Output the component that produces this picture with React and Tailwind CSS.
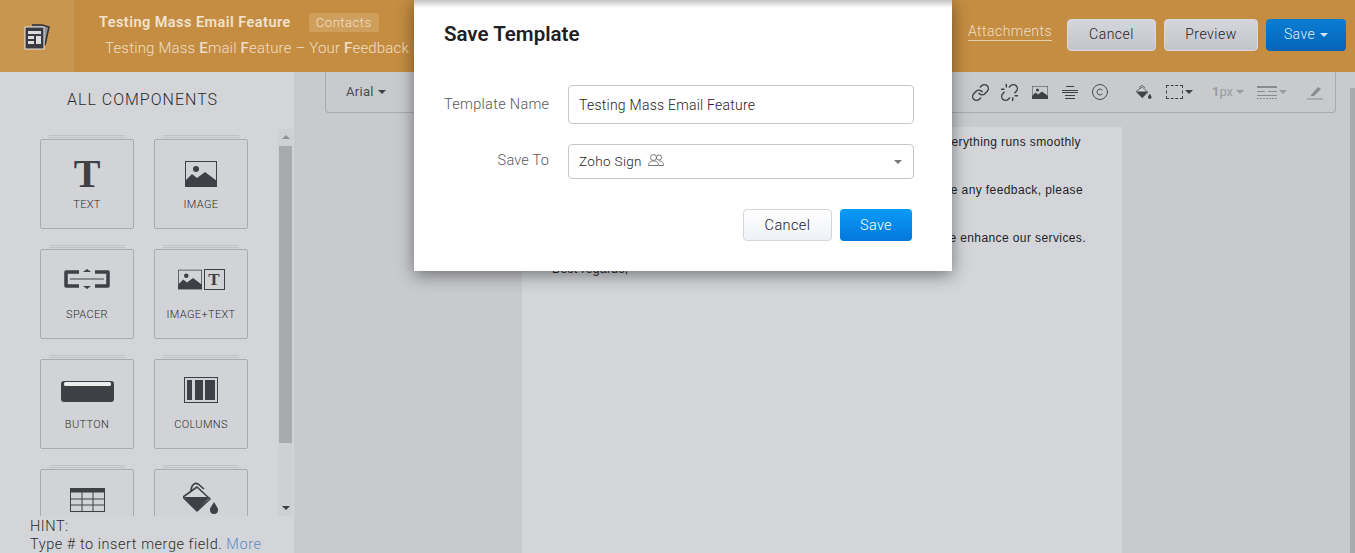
import { Copyright, Link, Unlink } from 'lucide-react';

const ink = '#3f4045';

function Caret({ className = 'border-t-[#3f4045]' }) {
  return <span className={`inline-block w-0 h-0 border-x-[4px] border-x-transparent border-t-[4px] ${className}`} />;
}

function PictureIcon({ w = 32, h = 26 }) {
  return (
    <svg width={w} height={h} viewBox="0 0 32 26">
      <rect x="0.5" y="0.5" width="31" height="25" fill="none" stroke={ink} />
      <circle cx="11" cy="8" r="3" fill={ink} />
      <path d="M0 25V20L7 13L12 17L20 11L32 20V26H0Z" fill={ink} />
    </svg>
  );
}

function TextGlyph({ size = 40 }) {
  return (
    <span className="font-['Liberation_Serif',serif] font-bold leading-none text-[#3f4045]" style={{ fontSize: size }}>T</span>
  );
}

function SpacerIcon() {
  return (
    <svg width="46" height="20" viewBox="0 0 46 20" fill="none">
      <path d="M15 3H2V17H15M31 3H44V17H31" stroke={ink} strokeWidth="3.5" strokeLinejoin="round" />
      <path d="M6 10H40" stroke={ink} />
      <path d="M19 3L23 0L27 3ZM19 17L23 20L27 17Z" fill={ink} />
    </svg>
  );
}

function ImageTextIcon() {
  return (
    <div className="flex gap-[2px]">
      <PictureIcon w={24} h={21} />
      <div className="w-[21px] h-[21px] border border-[#3f4045] flex items-center justify-center">
        <TextGlyph size={17} />
      </div>
    </div>
  );
}

function ButtonIcon() {
  return (
    <svg width="53" height="21" viewBox="0 0 53 21">
      <rect width="53" height="21" rx="3" fill={ink} />
      <rect x="3" y="1" width="47" height="4" rx="1.5" fill="#eceded" />
    </svg>
  );
}

function ColumnsIcon() {
  return (
    <svg width="34" height="26" viewBox="0 0 34 26">
      <rect x="0.5" y="0.5" width="33" height="25" fill="none" stroke={ink} />
      <path d="M3 3H8V23H3ZM11 3H19V23H11ZM21 3H31V23H21Z" fill={ink} />
    </svg>
  );
}

function TableIcon() {
  return (
    <svg width="35" height="24" viewBox="0 0 35 24" fill="none" stroke={ink}>
      <rect x="0.5" y="0.5" width="34" height="23" />
      <rect x="0" y="0" width="35" height="4" fill={ink} />
      <path d="M0 11H35M0 17H35M12 4V24M23 4V24" />
    </svg>
  );
}

function BucketIcon({ size = 36 }) {
  return (
    <svg width={size} height={size} viewBox="0 0 36 32">
      <path d="M8 9C8 3 12 0 15 2L21 7" fill="none" stroke={ink} strokeWidth="1.6" />
      <path d="M0 15L14 5L27 17L14 29Z" fill="#d3d4d8" stroke={ink} strokeWidth="1.6" strokeLinejoin="round" />
      <path d="M1 15H27L14 29Z" fill={ink} />
      <path d="M31 20C33 24 35 25 35 28A4 4 0 0 1 27 28C27 25 29 24 31 20Z" fill={ink} />
    </svg>
  );
}

function ComponentCard({ label, iconClass, children }) {
  return (
    <div className="relative w-[94px] h-[90px] border border-[#a9abaf] rounded-[2px] bg-[#d2d3d7] flex flex-col items-center">
      <span className="absolute -top-[5px] left-[8px] right-[8px] h-[3px] border-y border-y-[#c1c2c6]" />
      <div className={`h-[58px] w-full flex items-center justify-center ${iconClass}`}>{children}</div>
      {label && <span className="text-[11px] leading-[14px] tracking-[0.35px] font-light text-[#2b2c30] whitespace-nowrap">{label}</span>}
    </div>
  );
}

function Sidebar() {
  return (
    <aside className="w-[294px] shrink-0 bg-[#d4d5d9] flex flex-col h-[481px]">
      <h2 className="h-[57px] pt-[18px] pl-[67px] text-[16px] leading-[20px] tracking-[1px] font-light text-[#2b2c30]">ALL COMPONENTS</h2>
      <div className="relative flex-1 min-h-0 overflow-hidden">
        <div className="grid grid-cols-[94px_94px] gap-x-[20px] gap-y-[20px] pl-[40px] pt-[10px]">
          <ComponentCard label="TEXT" iconClass="pt-[10px]"><TextGlyph /></ComponentCard>
          <ComponentCard label="IMAGE" iconClass="pt-[10px]"><PictureIcon /></ComponentCard>
          <ComponentCard label="SPACER" iconClass="pt-0"><SpacerIcon /></ComponentCard>
          <ComponentCard label="IMAGE+TEXT" iconClass="pt-0"><ImageTextIcon /></ComponentCard>
          <ComponentCard label="BUTTON" iconClass="pt-[5px]"><ButtonIcon /></ComponentCard>
          <ComponentCard label="COLUMNS" iconClass="pt-[2px]"><ColumnsIcon /></ComponentCard>
          <ComponentCard iconClass="pt-[1px]"><TableIcon /></ComponentCard>
          <ComponentCard iconClass="pb-[2px]"><BucketIcon /></ComponentCard>
        </div>
        <div className="absolute right-[1px] top-0 bottom-0 w-[15px] bg-[#cfd0d4] flex flex-col items-center justify-between py-[6px]">
          <span className="w-0 h-0 border-x-[4px] border-x-transparent border-b-[4px] border-b-[#8e8f93]" />
          <span className="absolute left-[1px] top-[17px] w-[13px] h-[297px] bg-[#a9aaae]" />
          <Caret />
        </div>
      </div>
      <div className="h-[37px] pt-[2px] pl-[30px] text-[14.5px] leading-[18px] tracking-[0.55px] font-light text-[#2b2c30]">
        <p>HINT:</p>
        <p>Type # to insert merge field. <span className="text-[#5b8cc4]">More</span></p>
      </div>
    </aside>
  );
}

function Toolbar() {
  return (
    <div className="h-[41px] mx-[31px] mr-[19px] border border-t-0 border-[#a9aaae] rounded-b-[4px] flex items-center text-[#3f4045]">
      <span className="ml-[20px] text-[13px] tracking-[0.3px] flex items-center gap-[4px] text-[#4a4b50]">Arial <Caret /></span>
      <div className="ml-auto flex items-center mr-[5px]">
        <span className="w-[29px] flex justify-center"><Link size={19} strokeWidth={1.8} /></span>
        <span className="w-[29px] flex justify-center"><Unlink size={19} strokeWidth={1.8} /></span>
        <span className="w-[31px] flex justify-center"><PictureIcon w={16} h={13} /></span>
        <span className="w-[30px] flex justify-center">
          <svg width="16" height="16" viewBox="0 0 16 16" stroke={ink}><path d="M4 2.5H12M0 6.5H16M0 8.5H16M3 11.5H13M3 14.5H13" /></svg>
        </span>
        <span className="w-[30px] flex justify-center"><Copyright size={18} strokeWidth={1.2} /></span>
        <span className="w-[43px] pl-[14px] flex justify-center"><BucketIcon size={16} /></span>
        <span className="w-[38px] ml-[1px] pl-[2px] flex items-center justify-center gap-[2px]">
          <span className="w-[17px] h-[14px] border border-dashed border-[#3f4045]" /><Caret />
        </span>
        <span className="w-[46px] ml-[8px] flex items-center justify-center gap-[3px] text-[13px] text-[#9a9b9f]"><span><b>1</b>px</span><Caret className="border-t-[#9a9b9f]" /></span>
        <span className="w-[42px] flex items-center justify-center gap-[2px]">
          <svg width="20" height="15" viewBox="0 0 20 15" stroke="#8a8b8f"><path d="M0 1.5H20M0 2.5H20M0 6.5H8M11 6.5H20M0 10.5H20" strokeWidth="1" /><path d="M0 13.5H20" strokeDasharray="2 1" /></svg>
          <Caret className="border-t-[#9a9b9f]" />
        </span>
        <span className="w-[30px] ml-[7px] flex justify-center">
          <svg width="16" height="15" viewBox="0 0 16 15"><path d="M4 10L11 2L14 4L7 11L4 11Z" fill="#8a8b8f" /><path d="M0 14H16" stroke="#8a8b8f" /></svg>
        </span>
      </div>
    </div>
  );
}

function EmailBody() {
  return (
    <div className="w-[600px] h-[426px] ml-[228px] mt-[14px] bg-[#d4d5d9] font-['Liberation_Sans',sans-serif] text-[12px] tracking-[0.4px] text-[#222327] pt-[8px]">
      <p className="h-[48px] leading-[14px] text-right pr-[41px]">We are testing this feature so that everything runs smoothly</p>
      <p className="h-[48px] leading-[14px] text-right pr-[39px]">If you have any feedback, please</p>
      <p className="h-[31px] leading-[14px] text-right pr-[36px]">Your input will help us as we enhance our services.</p>
      <p className="leading-[14px] pl-[30px]">Best regards,</p>
    </div>
  );
}

function SaveTemplateModal() {
  return (
    <div className="absolute left-[414px] top-0 w-[538px] h-[271px] bg-white shadow-[0_4px_16px_rgba(0,0,0,0.45)] px-[30px]">
      <div className="absolute inset-x-0 top-0 h-[8px] bg-gradient-to-b from-[#c4c4c4] to-white" />
      <h1 className="relative pt-[21px] text-[20.5px] leading-[26px] font-semibold text-[#1f2024]">Save Template</h1>
      <div className="grid grid-cols-[105px_346px] gap-x-[19px] pt-[38px]">
        <label className="text-right pt-[10px] text-[14.5px] leading-[20px] tracking-[0.3px] font-light text-[#55565b] whitespace-nowrap">Template Name</label>
        <div className="h-[39px] border border-[#c6c7ca] rounded-[4px] flex items-center px-[10px] pt-[1px] text-[14px] tracking-[0.25px] font-light text-[#1f2024]">Testing Mass Email Feature</div>
        <label className="text-right mt-[20px] pt-[7px] text-[14.5px] leading-[20px] tracking-[0.2px] font-light text-[#55565b]">Save To</label>
        <div className="mt-[20px] h-[35px] border border-[#c6c7ca] rounded-[4px] flex items-center pl-[10px] pr-[11px] text-[13.5px] tracking-[0.35px] font-light text-[#1f2024]">
          <span>Zoho Sign</span>
          <svg className="ml-[6px] -mt-[4px]" width="16" height="12" viewBox="0 0 16 12" fill="none" stroke="#77787d"><circle cx="5.5" cy="3.5" r="3" /><circle cx="11" cy="3.5" r="2.6" /><path d="M0.5 11.5C0.5 8 3 7 5.5 7S10.5 8 10.5 11.5ZM11 7C13.5 7 15.5 8 15.5 11.5H11" /></svg>
          <span className="ml-auto flex"><Caret className="border-t-[#77787d]" /></span>
        </div>
      </div>
      <div className="flex justify-end gap-[8px] mt-[30px] pr-[10px]">
        <button className="w-[89px] h-[32px] pt-[1px] rounded-[4px] border border-[#d3d5da] bg-gradient-to-b from-white to-[#eef1f6] text-[14.5px] tracking-[0.4px] font-light text-[#1f2024]">Cancel</button>
        <button className="w-[72px] h-[32px] pt-[1px] rounded-[4px] bg-gradient-to-b from-[#0a9bf5] to-[#0677dc] text-[14.5px] tracking-[0.3px] font-light text-white">Save</button>
      </div>
    </div>
  );
}

export default function App() {
  return (
    <div className="relative w-[1355px] h-[553px] overflow-hidden bg-[#c9cace] font-['Roboto',sans-serif]">
      <header className="h-[72px] bg-[#c48d42] flex">
        <div className="w-[74px] bg-[#c8964f] flex items-center justify-center">
          <svg width="26" height="27" viewBox="0 0 26 27">
            <path d="M8 2H18L25 4L21 22" fill="#8d8f92" stroke="#2e2f33" strokeWidth="1.5" />
            <rect x="1" y="4" width="19" height="22" fill="#3a3b40" stroke="#e8e8e6" />
            <path d="M4 8H17V11H4ZM4 13H10V16H4ZM4 18H10V21H4ZM12 13H17V21H12Z" fill="#dcdcdc" />
          </svg>
        </div>
        <div className="w-[340px] pl-[25px] pt-[13px] overflow-hidden">
          <div className="flex items-center h-[19px]">
            <span className="text-[14.5px] font-semibold tracking-[0.45px] text-[#f1e3cf] whitespace-nowrap">Testing Mass Email Feature</span>
            <span className="ml-[18px] w-[70px] h-[19px] rounded-[2px] bg-[#cf9f5e] text-center text-[13px] leading-[19px] tracking-[0.55px] font-light text-[#f0e0c6]">Contacts</span>
          </div>
          <p className="ml-[6px] mt-[6px] text-[15px] leading-[20px] tracking-[0.18px] font-light text-[#f0dfc6] whitespace-nowrap">
            Testing Mass <b className="font-medium">E</b>mail <b className="font-medium">F</b>eature – Your <b className="font-medium">F</b>eedback Needed
          </p>
        </div>
        <div className="flex-1 flex items-center justify-end pr-[9px] pb-[3px] gap-[8px]">
          <a className="mr-[7px] mb-[5px] text-[14px] leading-[17px] tracking-[0.45px] font-light text-[#f0dfc6] border-b border-[#e6cfa9]">Attachments</a>
          <button className="w-[89px] h-[32px] rounded-[4px] border border-[#d8d9dc] bg-gradient-to-b from-[#d4d6db] to-[#c3c5cb] text-[14px] tracking-[0.5px] font-light text-[#1f2024]">Cancel</button>
          <button className="w-[94px] h-[32px] rounded-[4px] border border-[#d8d9dc] bg-gradient-to-b from-[#d4d6db] to-[#c3c5cb] text-[14px] tracking-[0.5px] font-light text-[#1f2024]">Preview</button>
          <button className="w-[80px] h-[32px] rounded-[4px] bg-gradient-to-b from-[#0a7ed4] to-[#0664b8] text-[14px] tracking-[0.4px] font-light text-[#e4eff8] flex items-center justify-center gap-[5px]">Save <Caret className="border-t-[#d4e6f5]" /></button>
        </div>
      </header>
      <div className="flex">
        <Sidebar />
        <main className="relative flex-1 min-w-0">
          <Toolbar />
          <EmailBody />
          <div className="absolute right-0 top-[16px] bottom-0 w-[5px] bg-[#a9aaae]" />
        </main>
      </div>
      <SaveTemplateModal />
    </div>
  );
}
